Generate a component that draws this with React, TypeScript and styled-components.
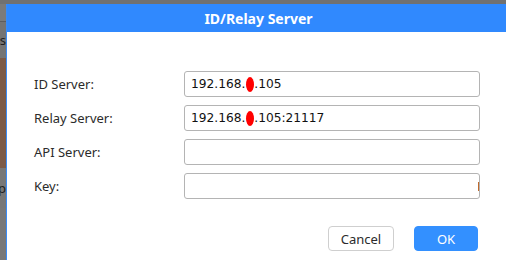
import styled, { createGlobalStyle } from 'styled-components';

const GlobalStyle = createGlobalStyle`
  html, body {
    margin: 0;
    padding: 0;
    background: #727272;
    overflow: hidden;
  }
`;

const Page = styled.div`
  width: 506px;
  height: 260px;
  display: flex;
  flex-direction: column;
  overflow: hidden;
`;

const TopStrip = styled.div`
  height: 4px;
  flex: none;
  background: #717171;
`;

const Main = styled.div`
  flex: 1;
  display: flex;
  min-height: 0;
`;

// peek of the app window behind the dialog
const Behind = styled.div`
  width: 6px;
  flex: none;
  display: flex;
  flex-direction: column;
  overflow: hidden;
  font-family: 'Noto Sans', sans-serif;
  font-size: 13px;
  color: #1e1e1e;
`;

const BehindBlock = styled.div<{ $h: number; $bg: string }>`
  height: ${(p) => p.$h}px;
  flex: none;
  background: ${(p) => p.$bg};
  display: flex;
  align-items: center;
  justify-content: flex-end;
  overflow: hidden;
  white-space: nowrap;
  line-height: 1;
`;

const Dialog = styled.div`
  width: 501px;
  flex: none;
  display: flex;
  flex-direction: column;
  background: #ffffff;
  border-left: 1px solid #3a8cf6;
`;

const TitleBar = styled.div`
  height: 28px;
  flex: none;
  background: #3089fe;
  color: #ffffff;
  font-family: 'Noto Sans', sans-serif;
  font-weight: 700;
  font-size: 14px;
  display: flex;
  align-items: center;
  justify-content: center;
  padding-left: 2px;
`;

const Body = styled.div`
  flex: 1;
  padding: 39px 0 0 27px;
  display: flex;
  flex-direction: column;
`;

const Form = styled.div`
  display: grid;
  grid-template-columns: 150px 296px;
  grid-auto-rows: 26px;
  row-gap: 8px;
  align-items: center;
`;

const Label = styled.div`
  font-family: 'Noto Sans', sans-serif;
  font-size: 13px;
  color: #2b2b2b;
`;

const Field = styled.div`
  height: 26px;
  box-sizing: border-box;
  border: 1px solid #b4b4b4;
  border-radius: 3px;
  padding: 0 6px;
  display: flex;
  align-items: center;
  font-family: 'DejaVu Sans', sans-serif;
  font-size: 12.2px;
  color: #111111;
  white-space: nowrap;
  overflow: hidden;
`;

const Redact = styled.span`
  display: inline-block;
  width: 8px;
  height: 15px;
  border-radius: 50%;
  background: #ff0000;
  margin: 0 0 0 1px;
`;

const Caret = styled.span`
  margin-left: auto;
  margin-right: -6px;
  width: 1px;
  height: 9px;
  background: #c06a2c;
`;

const Actions = styled.div`
  display: flex;
  justify-content: flex-end;
  gap: 20px;
  width: 444px;
  margin-top: 27px;
`;

const Button = styled.button<{ $primary?: boolean }>`
  height: 25px;
  width: ${(p) => (p.$primary ? 64 : 66)}px;
  box-sizing: border-box;
  border-radius: 4px;
  border: 1px solid ${(p) => (p.$primary ? '#3390ff' : '#cfcfcf')};
  background: ${(p) => (p.$primary ? '#3390ff' : '#ffffff')};
  color: ${(p) => (p.$primary ? '#ffffff' : '#2b2b2b')};
  font-family: 'Noto Sans', sans-serif;
  font-size: 13px;
  padding: 0;
`;

export default function App() {
  return (
    <Page>
      <GlobalStyle />
      <TopStrip />
      <Main>
        <Behind>
          <BehindBlock $h={17} $bg="#7b7b7b" />
          <BehindBlock $h={1} $bg="#5d5d5d" />
          <BehindBlock $h={36} $bg="#747474">s</BehindBlock>
          <BehindBlock $h={110} $bg="#7c5a47" />
          <BehindBlock $h={40} $bg="#777777">p</BehindBlock>
          <BehindBlock $h={60} $bg="#787878" />
        </Behind>
        <Dialog>
          <TitleBar>ID/Relay Server</TitleBar>
          <Body>
            <Form>
              <Label>ID Server:</Label>
              <Field>
                192.168.<Redact />.105
              </Field>
              <Label>Relay Server:</Label>
              <Field>
                192.168.<Redact />.105:21117
              </Field>
              <Label>API Server:</Label>
              <Field />
              <Label>Key:</Label>
              <Field>
                <Caret />
              </Field>
            </Form>
            <Actions>
              <Button>Cancel</Button>
              <Button $primary>OK</Button>
            </Actions>
          </Body>
        </Dialog>
      </Main>
    </Page>
  );
}
